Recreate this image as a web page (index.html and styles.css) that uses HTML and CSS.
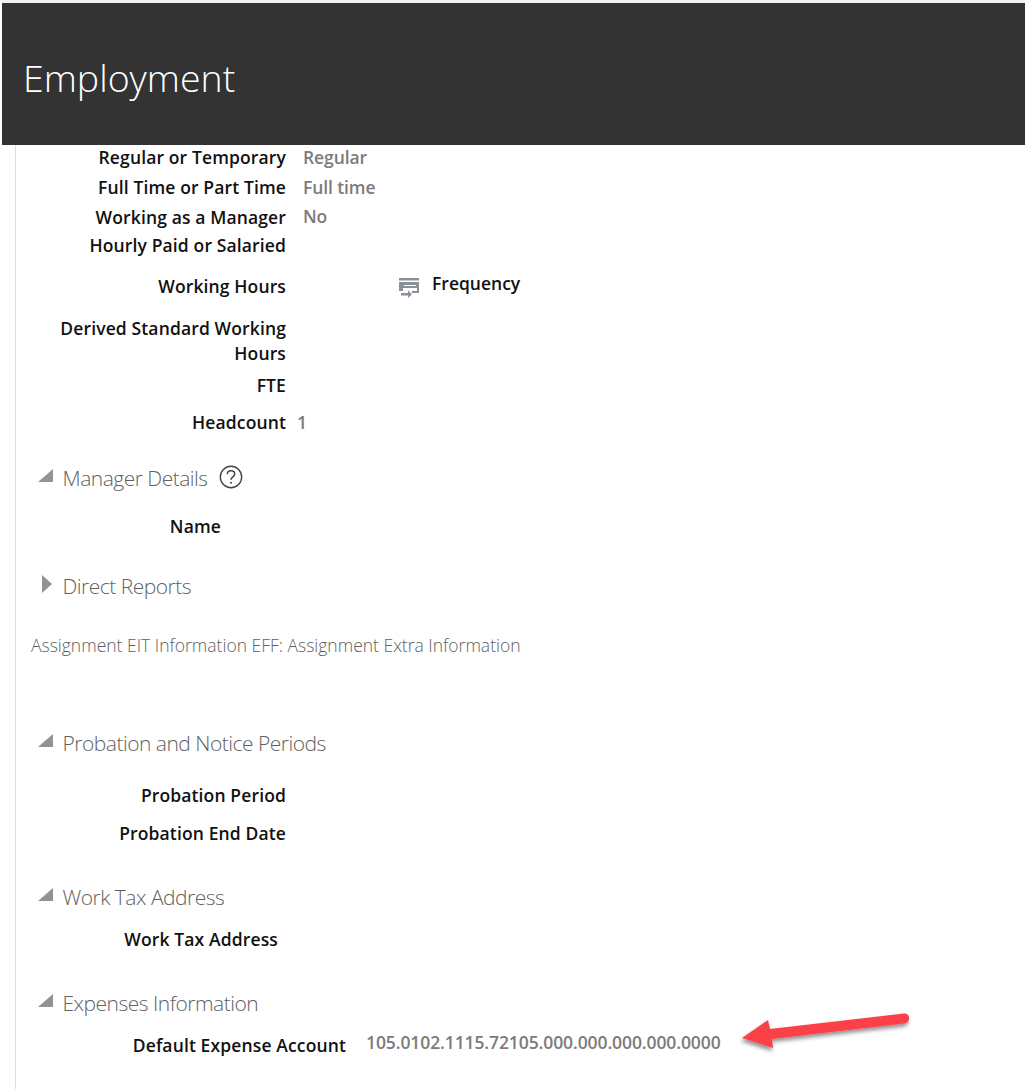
FILE: index.html
```html
<!DOCTYPE html>
<html lang="en">
<head>
<meta charset="UTF-8">
<title>Employment</title>
<link rel="stylesheet" href="styles.css">
</head>
<body>
  <header class="page-header">
    <h1 class="page-title">Employment</h1>
  </header>

  <main class="content">
    <div class="row row-regular">
      <span class="label">Regular or Temporary</span>
      <span class="value">Regular</span>
    </div>
    <div class="row row-full">
      <span class="label">Full Time or Part Time</span>
      <span class="value">Full time</span>
    </div>
    <div class="row row-manager">
      <span class="label">Working as a Manager</span>
      <span class="value value-up">No</span>
    </div>
    <div class="row row-hourly">
      <span class="label">Hourly Paid or Salaried</span>
    </div>
    <div class="row row-hours">
      <span class="label">Working Hours</span>
      <svg class="freq-icon" viewBox="0 0 20 20" width="20" height="20">
        <path fill="#8a9199" d="M0 0h20v2.500H0z"/>
        <path fill="#8a9199" fill-rule="evenodd" d="M0 4h20v11h-7v-2h5v-3H4v3H0zM5 7v1h12V7z"/>
        <path fill="#8a9199" d="M2 15h7v-2.500l4 3.700-4 3.800v-2.500H2z"/>
      </svg>
      <span class="freq-text">Frequency</span>
    </div>
    <div class="row row-derived">
      <span class="label label-wrap">Derived Standard Working Hours</span>
    </div>
    <div class="row row-fte">
      <span class="label">FTE</span>
    </div>
    <div class="row row-headcount">
      <span class="label">Headcount</span>
      <span class="value value-near">1</span>
    </div>

    <h2 class="section section-manager">
      <svg class="twisty" viewBox="0 0 16 16" width="16" height="16"><path fill="#8f9499" d="M15 2v13H0z"/></svg>
      Manager Details
      <svg class="help" viewBox="0 0 24 24" width="24" height="24">
        <circle cx="12" cy="12" r="10.700" fill="none" stroke="#444" stroke-width="1.400"/>
        <path fill="none" stroke="#444" stroke-width="1.500" d="M8.300 9.300c0-2.300 1.700-3.500 3.700-3.500s3.700 1.200 3.700 3.200c0 2.800-3.700 2.800-3.700 5.700"/>
        <circle cx="12" cy="17.800" r="1" fill="#444"/>
      </svg>
    </h2>
    <div class="row row-name">
      <span class="label label-name">Name</span>
    </div>

    <h2 class="section section-reports">
      <svg class="twisty twisty-closed" viewBox="0 0 16 20" width="16" height="20"><path fill="#8f9499" d="M3 1l10 9-10 9z"/></svg>
      Direct Reports
    </h2>

    <p class="eit-text">Assignment EIT Information EFF: Assignment Extra Information</p>

    <h2 class="section section-probation">
      <svg class="twisty" viewBox="0 0 16 16" width="16" height="16"><path fill="#8f9499" d="M15 2v13H0z"/></svg>
      Probation and Notice Periods
    </h2>
    <div class="row row-period">
      <span class="label">Probation Period</span>
    </div>
    <div class="row row-end">
      <span class="label">Probation End Date</span>
    </div>

    <h2 class="section section-tax">
      <svg class="twisty" viewBox="0 0 16 16" width="16" height="16"><path fill="#8f9499" d="M15 2v13H0z"/></svg>
      Work Tax Address
    </h2>
    <div class="row row-tax">
      <span class="label label-tax">Work Tax Address</span>
    </div>

    <h2 class="section section-expenses">
      <svg class="twisty" viewBox="0 0 16 16" width="16" height="16"><path fill="#8f9499" d="M15 2v13H0z"/></svg>
      Expenses Information
    </h2>
    <div class="row row-account">
      <span class="label label-account">Default Expense Account</span>
      <span class="value value-account">105.0102.1115.72105.000.000.000.000.0000</span>
    </div>
  </main>

  <!-- annotation arrow drawn on top of the screenshot -->
  <svg class="arrow" viewBox="0 0 200 50" width="200" height="50">
    <defs>
      <filter id="arrow-shadow" x="-10%" y="-30%" width="120%" height="170%">
        <feDropShadow dx="-1" dy="3" stdDeviation="2" flood-color="#000" flood-opacity="0.45"/>
      </filter>
    </defs>
    <path filter="url(#arrow-shadow)" fill="#fb4146" d="M6 33L32 15l2 9 134-15.500c6.500-.7 7 9.300.5 10L36 34l1 9z"/>
  </svg>
</body>
</html>
```

FILE: styles.css
```css
:root {
  --ui-font: "Open Sans", "Noto Sans", sans-serif;
  --label-color: #111;
  --value-color: #7b7b7b;
  --heading-color: #5f6163;
}

* {
  box-sizing: border-box;
}

body {
  margin: 0;
  padding-top: 3px;
  background-color: #fff;
  font-family: var(--ui-font);
  position: relative;
  height: 1089px;
  overflow: hidden;
}

body::before {
  content: "";
  position: absolute;
  top: 0;
  left: 0;
  right: 0;
  height: 3px;
  background-color: #f2f2f2;
}

.page-header {
  margin-left: 2px;
  height: 142px;
  background-color: #333;
  padding: 50px 0 0 21px;
}

.page-title {
  margin: 0;
  font-size: 37.5px;
  line-height: 50px;
  font-weight: 300;
  color: #fff;
}

.content {
  margin-left: 15px;
  height: 944px;
  border-left: 1px solid #d6dfe6;
}

.row {
  display: flex;
  font-size: 17.5px;
  font-weight: 600;
  line-height: 25px;
  color: var(--label-color);
}

.label {
  width: 270px;
  text-align: right;
  letter-spacing: 0.13px;
  flex-shrink: 0;
}

.label-wrap {
  padding-left: 30px;
}

.value {
  margin-left: 17px;
  color: var(--value-color);
  letter-spacing: -0.1px;
}

.value-up {
  margin-top: -1px;
}

.value-near {
  margin-left: 11px;
}

.row-regular { margin-top: 0; }
.row-full { margin-top: 5px; }
.row-manager { margin-top: 5px; }
.row-hourly { margin-top: 3px; }
.row-hours { margin-top: 16px; }
.row-derived { margin-top: 17px; }
.row-fte { margin-top: 7px; }
.row-headcount { margin-top: 12px; }

.freq-icon {
  margin: 4px 0 0 113px;
}

.freq-text {
  margin: -3px 0 0 13px;
}

.section {
  display: flex;
  align-items: center;
  margin: 0;
  padding-left: 22px;
  font-size: 21px;
  font-weight: 300;
  line-height: 30px;
  color: var(--heading-color);
  letter-spacing: -0.5px;
}

.twisty {
  margin-right: 8.5px;
  margin-top: -6px;
  flex-shrink: 0;
}

.twisty-closed {
  margin-left: 1px;
  margin-right: 7.5px;
  margin-top: -4px;
}

.help {
  margin-left: 11px;
  margin-top: -2px;
}

.section-manager { margin-top: 28px; }
.row-name { margin-top: 21px; }
.label-name { width: 205px; }
.section-reports { margin-top: 32px; }

.eit-text {
  margin: 32px 0 0 15px;
  font-size: 17.5px;
  font-weight: 300;
  line-height: 24px;
  color: var(--heading-color);
}

.section-probation { margin-top: 71px; }
.row-period { margin-top: 25px; }
.row-end { margin-top: 13px; }
.section-tax { margin-top: 36px; }
.row-tax { margin-top: 15px; }
.label-tax { width: 262px; }
.section-expenses { margin-top: 36px; }
.row-account { margin-top: 15px; }
.label-account { width: 330px; }

.value-account {
  margin-left: 20px;
  margin-top: -3px;
}

.arrow {
  position: absolute;
  left: 736px;
  top: 1005px;
}
```
